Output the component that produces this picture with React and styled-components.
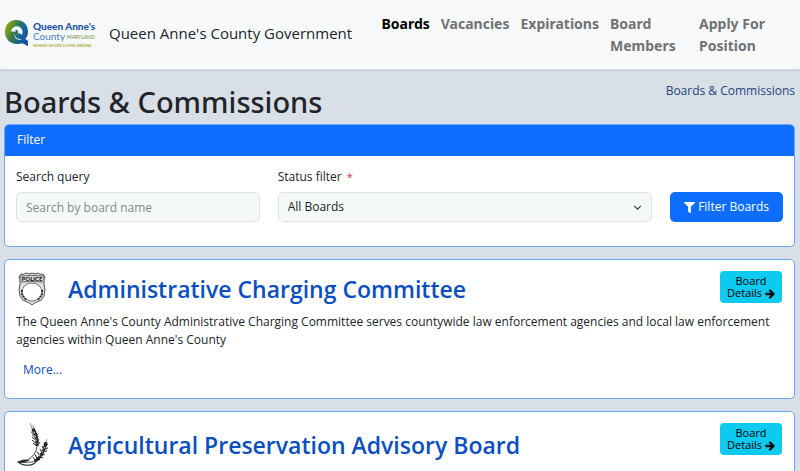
import styled, { createGlobalStyle, ThemeProvider } from "styled-components";
import { FaFilter, FaArrowRight } from "react-icons/fa";

const theme = {
  colors: {
    page: "#d9dfe7",
    light: "#f8f9fb",
    white: "#ffffff",
    text: "#212529",
    muted: "#717274",
    primary: "#0d6efd",
    cardBorder: "#6ea5f7",
    link: "#0a4fc0",
    crumb: "#23467f",
    info: "#0dcaf0",
    field: "#f4f8f6",
    fieldBorder: "#dee2e6",
    danger: "#dc3545",
  },
  fonts: {
    body: '"Open Sans", "Noto Sans", sans-serif',
    heading: '"Noto Sans", "Open Sans", sans-serif',
  },
};

const GlobalStyle = createGlobalStyle`
  *, *::before, *::after {
    box-sizing: border-box;
  }

  body {
    margin: 0;
    background-color: ${({ theme }) => theme.colors.page};
    color: ${({ theme }) => theme.colors.text};
    font-family: ${({ theme }) => theme.fonts.body};
    font-size: 12px;
    line-height: 18px;
  }

  a {
    text-decoration: none;
  }
`;

const Header = styled.header`
  display: flex;
  align-items: flex-start;
  padding: 13px 12px 12px 4px;
  background-color: ${({ theme }) => theme.colors.light};
  border-bottom: 1px solid #d3d8de;
  box-shadow: 0 1px 2px rgba(0, 0, 0, 0.08);
`;

const Brand = styled.a`
  display: flex;
  align-items: center;
  gap: 12px;
  height: 40px;
  color: ${({ theme }) => theme.colors.text};
  font-size: 15px;
  line-height: 22px;
  white-space: nowrap;
`;

const Nav = styled.nav`
  display: flex;
  gap: 11px;
  margin-left: auto;
`;

const NavLink = styled.a`
  flex: 0 1 ${({ $basis }) => $basis || "auto"};
  color: ${({ theme, $active }) => ($active ? "#000000" : theme.colors.muted)};
  font-family: ${({ theme }) => theme.fonts.heading};
  font-size: 14px;
  font-weight: 700;
  line-height: 22px;
`;

const Main = styled.main`
  display: flex;
  flex-direction: column;
  gap: 12px;
  padding: 12px 5px 12px 4px;
`;

const TitleRow = styled.div`
  display: flex;
  justify-content: space-between;
  align-items: flex-start;
  margin-bottom: -12px;
`;

const PageTitle = styled.h1`
  margin: 0;
  padding-bottom: 3px;
  font-family: ${({ theme }) => theme.fonts.heading};
  font-size: 29px;
  font-weight: 500;
  line-height: 39px;
`;

const Crumb = styled.a`
  color: ${({ theme }) => theme.colors.crumb};
`;

const Card = styled.section`
  background-color: ${({ theme }) => theme.colors.white};
  border: 1px solid ${({ theme }) => theme.colors.cardBorder};
  border-radius: 5px;
  overflow: hidden;
`;

const CardHeader = styled.div`
  padding: 6px 12px 7px;
  background-color: ${({ theme }) => theme.colors.primary};
  color: ${({ theme }) => theme.colors.white};
`;

const FilterForm = styled.form`
  display: grid;
  grid-template-columns: repeat(12, 1fr);
  column-gap: 18px;
  align-items: end;
  padding: 12px 11px 24px;
`;

const Field = styled.div`
  grid-column: span ${({ $span }) => $span};
  display: flex;
  flex-direction: column;
  gap: 6px;
`;

const Required = styled.span`
  margin-left: 2px;
  color: ${({ theme }) => theme.colors.danger};
  font-size: 11px;
`;

const TextInput = styled.input`
  width: 100%;
  height: 30px;
  padding: 0 9px;
  background-color: ${({ theme }) => theme.colors.field};
  border: 1px solid ${({ theme }) => theme.colors.fieldBorder};
  border-radius: 5px;
  color: ${({ theme }) => theme.colors.text};
  font: inherit;

  &::placeholder {
    color: #85898c;
    opacity: 1;
  }
`;

const SelectWrap = styled.div`
  position: relative;
`;

const Select = styled(TextInput).attrs({ as: "select" })`
  display: block;
  appearance: none;
`;

const Chevron = styled.svg`
  position: absolute;
  top: 11px;
  right: 10px;
  width: 9px;
  height: 9px;
  pointer-events: none;
`;

const FilterButton = styled.button`
  grid-column: span 2;
  display: flex;
  justify-content: center;
  align-items: center;
  gap: 3px;
  height: 30px;
  padding: 0;
  background-color: ${({ theme }) => theme.colors.primary};
  border: none;
  border-radius: 5px;
  color: ${({ theme }) => theme.colors.white};
  font: inherit;
  white-space: nowrap;
  cursor: pointer;
`;

const BoardBody = styled.div`
  padding: 11px 12px 19px 11px;
`;

const BoardHead = styled.div`
  display: flex;
  align-items: center;
`;

const BoardTitle = styled.h2`
  flex: 1;
  margin: 0 0 0 20px;
  font-size: 23px;
  font-weight: 600;
  line-height: 34px;

  a {
    color: ${({ theme }) => theme.colors.link};
  }
`;

const DetailsButton = styled.button`
  align-self: flex-start;
  width: 62px;
  height: 32px;
  padding: 0 4px;
  background-color: ${({ theme }) => theme.colors.info};
  border: none;
  border-radius: 4px;
  color: #000000;
  font-family: inherit;
  font-size: 11px;
  line-height: 12px;
  cursor: pointer;

  svg {
    stroke: currentColor;
    stroke-width: 44px;
    vertical-align: -2px;
  }
`;

const Description = styled.p`
  margin: 6px 0 0;
`;

const More = styled.a`
  display: inline-block;
  margin: 12px 0 0 7px;
  color: ${({ theme }) => theme.colors.link};
`;

const MarkText = styled.text`
  font-family: Lato, sans-serif;
`;

const Logo = () => (
  <svg width="93" height="30" viewBox="0 0 93 30" aria-hidden="true">
    <defs>
      <linearGradient id="q" x1="0" y1="0.2" x2="1" y2="0.7">
        <stop offset="0" stopColor="#a3ad00" />
        <stop offset="0.4" stopColor="#3b7d4b" />
        <stop offset="0.75" stopColor="#12629f" />
        <stop offset="1" stopColor="#1d4f9f" />
      </linearGradient>
    </defs>
    <path
      d="M12 2C5 2 1 7 1 14c0 7 5 12 12 12 3 0 5-1 7 0 2 1 3 2 4 2v-5c-1-1-2-2-3-2 2-2 3-4 3-7C24 6 19 2 12 2z"
      fill="url(#q)"
    />
    <path
      d="M7 14c0-5 6-8 10-4 2 2 2 5 1 7-1-1-2-2-4-1 1-3-1-5-3-4 1 1 1 2 0 2-2-1-3-1-4 0zM11 15c-1 4 3 7 8 6-4 2-10 0-8-6z"
      fill="#f8f9fb"
    />
    <MarkText x="29" y="12" fontSize="10" fontWeight="900" fill="#2456a4">Queen Anne's</MarkText>
    <MarkText x="29" y="22" fontSize="10" fill="#4b7fc0">County</MarkText>
    <MarkText x="63" y="21" fontSize="5" fill="#6f8a3a">MARYLAND</MarkText>
    <MarkText x="29" y="29" fontSize="4" fontWeight="700" fill="#b3ac3c">
      WHERE SHORE LIVING <tspan fontWeight="900">BEGINS</tspan>
    </MarkText>
  </svg>
);

const PoliceBadge = () => (
  <svg width="32" height="36" viewBox="0 0 32 36" aria-hidden="true">
    <path
      d="M5 3q3 1 5-1 3 2 6 0 3 2 6 0 2 2 5 1l2 3q-2 3-1 7 2 6 0 12-2 5-7 6-3 1-5 3-2-2-5-3-5-1-7-6-2-6 0-12 1-4-1-7z"
      fill="#dedede"
      stroke="#555555"
    />
    <ellipse cx="16" cy="21" rx="10" ry="9" fill="#ffffff" stroke="#777777" />
    <path d="M6 19q-1 6 5 10M26 19q1 6-5 10" fill="none" stroke="#333333" strokeWidth="2" strokeDasharray="2 1" />
    <path d="M4 5q12-1 24 0v6q-12-1-24 0z" fill="#dddddd" stroke="#666666" />
    <MarkText x="16" y="10" textAnchor="middle" fontSize="6" fontWeight="900" fill="#111111">POLICE</MarkText>
  </svg>
);

const Wheat = () => (
  <svg width="32" height="44" viewBox="0 0 32 46" preserveAspectRatio="none" aria-hidden="true">
    <g fill="none" stroke="#222222">
      <path d="M21 24q-1 10-10 15M24 38q-6 4-21 3" strokeWidth="0.8" />
      <path d="M1 41q7-4 12-2-5 3-12 2zM3 42q8 5 17-1-4 6-17 1z" fill="#222222" strokeWidth="0.6" />
      <path d="M14 0l3 8M17 2l1 6M31 17l-2 6" strokeWidth="0.5" />
      <path d="M17 6q5 9 4 18" strokeWidth="3" />
      <path
        d="M16 6l1 3 2-3M15 9l3 3 2-4M16 12l3 3 3-4M16 15l4 3 2-4M16 18l4 3 3-4M17 21l4 3 3-4"
        strokeWidth="1"
      />
      <path d="M30 20q-2 13-11 20" strokeWidth="3" />
      <path
        d="M28 21l1 4 3-3M26 24l2 4 4-2M24 27l2 4 5-2M21 30l3 4 5-1M19 33l2 4 6-1M17 36l2 3 5-1"
        strokeWidth="1"
      />
    </g>
    <path
      d="M18 9l1 2M19 13l1 2M20 17l0 2M21 21l0 1M29 25l-1 2M27 29l-1 2M24 33l-1 2"
      stroke="#ffffff"
      strokeWidth="0.8"
    />
  </svg>
);

const navItems = [
  { label: "Boards", active: true },
  { label: "Vacancies" },
  { label: "Expirations" },
  { label: "Board Members", basis: "78px" },
  { label: "Apply For Position", basis: "89px" },
];

const boards = [
  {
    name: "Administrative Charging Committee",
    icon: <PoliceBadge />,
    description:
      "The Queen Anne's County Administrative Charging Committee serves countywide law enforcement agencies and local law enforcement agencies within Queen Anne's County",
  },
  {
    name: "Agricultural Preservation Advisory Board",
    icon: <Wheat />,
  },
];

const App = () => {
  return (
    <ThemeProvider theme={theme}>
      <GlobalStyle />
      <Header>
        <Brand href="#">
          <Logo />
          Queen Anne's County Government
        </Brand>
        <Nav>
          {navItems.map(({ label, active, basis }) => (
            <NavLink key={label} href="#" $active={active} $basis={basis}>
              {label}
            </NavLink>
          ))}
        </Nav>
      </Header>
      <Main>
        <TitleRow>
          <PageTitle>Boards &amp; Commissions</PageTitle>
          <Crumb href="#">Boards &amp; Commissions</Crumb>
        </TitleRow>
        <Card>
          <CardHeader>Filter</CardHeader>
          <FilterForm onSubmit={(e) => e.preventDefault()}>
            <Field $span={4}>
              <label htmlFor="query">Search query</label>
              <TextInput id="query" type="text" placeholder="Search by board name" />
            </Field>
            <Field $span={6}>
              <label htmlFor="status">
                Status filter <Required>*</Required>
              </label>
              <SelectWrap>
                <Select id="status">
                  <option>All Boards</option>
                </Select>
                <Chevron viewBox="0 0 16 16" aria-hidden="true">
                  <path d="M2 5l6 6 6-6" fill="none" stroke="#343a40" strokeWidth="2" />
                </Chevron>
              </SelectWrap>
            </Field>
            <FilterButton type="submit">
              <FaFilter size={11} />
              Filter Boards
            </FilterButton>
          </FilterForm>
        </Card>
        {boards.map(({ name, icon, description }) => (
          <Card key={name}>
            <BoardBody>
              <BoardHead>
                {icon}
                <BoardTitle>
                  <a href="#">{name}</a>
                </BoardTitle>
                <DetailsButton type="button">
                  Board Details <FaArrowRight size={10} />
                </DetailsButton>
              </BoardHead>
              {description && (
                <>
                  <Description>{description}</Description>
                  <More href="#">More...</More>
                </>
              )}
            </BoardBody>
          </Card>
        ))}
      </Main>
    </ThemeProvider>
  );
};

export default App;
